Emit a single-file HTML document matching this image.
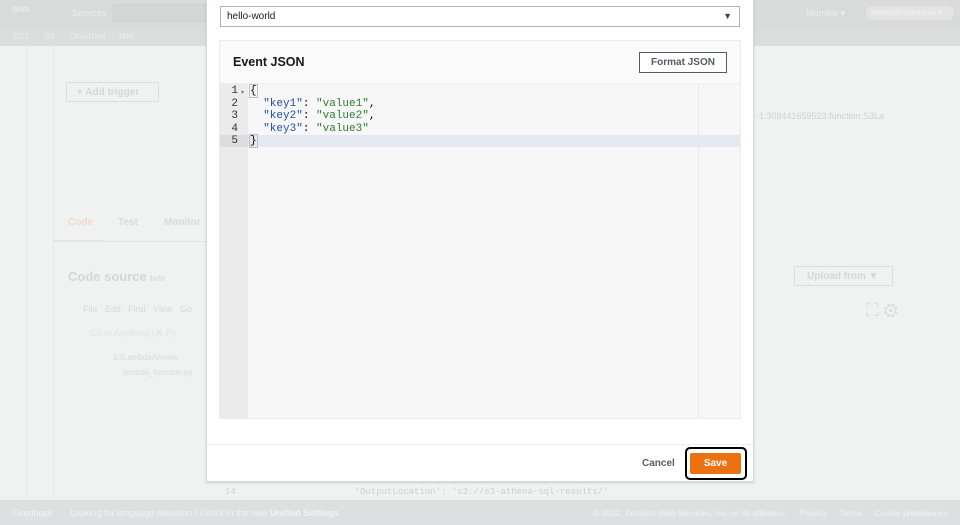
<!DOCTYPE html>
<html><head><meta charset="utf-8"><style>
*{box-sizing:border-box;margin:0;padding:0}
body{width:960px;height:525px;overflow:hidden;background:#f0f1f1;font-family:"Liberation Sans",sans-serif;position:relative}
.a{position:absolute;white-space:nowrap}
.mono{font-family:"Liberation Mono",monospace;font-size:11px}
</style></head><body>
<!-- background -->
<div class="a" style="left:0;top:0;width:960px;height:30px;background:#d9dada"></div>
<div class="a" style="left:0;top:30px;width:960px;height:16px;background:#dcdddd"></div>
<div class="a" style="left:12px;top:4px;font-size:10px;color:#eee">aws</div>
<div class="a" style="left:72px;top:8px;font-size:9px;color:#eee">Services</div>
<div class="a" style="left:113px;top:4px;width:95px;height:18px;border:1px solid #cfd0d0;background:#d4d5d5"></div>
<div class="a" style="left:13px;top:32px;font-size:8px;color:#eee">EC2 &nbsp;&nbsp;&nbsp;&nbsp;&nbsp; S3 &nbsp;&nbsp;&nbsp;&nbsp;&nbsp; CloudTrail &nbsp;&nbsp;&nbsp;&nbsp; IAM</div>
<div class="a" style="left:806px;top:8px;font-size:9px;color:#eee">Mumbai ▾</div>
<div class="a" style="left:866px;top:6px;width:88px;height:14px;border-radius:7px;background:#e3e3e3;font-size:8px;color:#f3f3f3;padding:2px 5px">hemanth-personal ▾</div>
<div class="a" style="left:26px;top:46px;width:1px;height:454px;background:#e6e7e7"></div>
<div class="a" style="left:53px;top:46px;width:1px;height:454px;background:#e8e9e9"></div>
<div class="a" style="left:66px;top:82px;width:93px;height:20px;border:1px solid #dcdede;font-size:10px;font-weight:bold;color:#d5d7d7;padding:4px 10px">+ Add trigger</div>
<div class="a" style="left:756px;top:111px;font-size:9px;color:#d0d2d2">-1:308441659523:function:S3La</div>
<div class="a" style="left:54px;top:241px;width:152px;height:1px;background:#e3e4e4"></div>
<div class="a" style="left:54px;top:240px;width:49px;height:2px;background:#e3e4e4"></div>
<div class="a" style="left:68px;top:217px;font-size:10px;font-weight:bold;color:#f3d9ca">Code</div>
<div class="a" style="left:118px;top:217px;font-size:10px;font-weight:bold;color:#d8dada">Test</div>
<div class="a" style="left:164px;top:217px;font-size:10px;font-weight:bold;color:#d8dada">Monitor</div>
<div class="a" style="left:68px;top:269px;font-size:13px;font-weight:bold;color:#d5d7d7">Code source <span style="font-size:8px;color:#d4dcea">Info</span></div>
<div class="a" style="left:794px;top:266px;width:99px;height:20px;border:1px solid #dcdede;font-size:10px;font-weight:bold;color:#d5d7d7;padding:4px 12px">Upload from ▼</div>
<div class="a" style="left:866px;top:300px;font-size:18px;color:#dadcdc">⛶ ⚙</div>
<div class="a" style="left:83px;top:304px;font-size:9px;color:#d8dada">File &nbsp; Edit &nbsp; Find &nbsp; View &nbsp; Go</div>
<div class="a" style="left:90px;top:328px;font-size:9px;color:#e2e3e3">Go to Anything (⌘ P)</div>
<div class="a" style="left:113px;top:353px;font-size:8px;color:#d8dada">S3LambdaAthena</div>
<div class="a" style="left:123px;top:368px;font-size:8px;color:#d8dada">lambda_function.py</div>
<div class="a" style="left:0;top:500px;width:960px;height:25px;background:#dedfe0"></div>
<div class="a" style="left:13px;top:508px;font-size:9px;color:#f2f2f2">Feedback &nbsp;&nbsp;&nbsp;&nbsp;&nbsp; Looking for language selection? Find it in the new <b>Unified Settings</b></div>
<div class="a" style="left:593px;top:508px;font-size:8.5px;color:#f2f2f2">© 2022, Amazon Web Services, Inc. or its affiliates. &nbsp;&nbsp;&nbsp;&nbsp; Privacy &nbsp;&nbsp;&nbsp; Terms &nbsp;&nbsp;&nbsp; Cookie preferences</div>
<div class="a mono" style="left:225px;top:487px;font-size:9px;color:#cdcfcf">14 &nbsp;&nbsp;&nbsp;&nbsp;&nbsp;&nbsp;&nbsp;&nbsp;&nbsp;&nbsp;&nbsp;&nbsp;&nbsp;&nbsp;&nbsp;&nbsp;&nbsp;&nbsp;&nbsp;&nbsp;&nbsp;'OutputLocation': 's3://s3-athena-sql-results/'</div>

<!-- modal -->
<div class="a" style="left:206px;top:0;width:548px;height:482px;background:#fff;border:1px solid #d5dbdb;border-top:none;box-shadow:0 1px 2px rgba(0,0,0,.15)"></div>
<div class="a" style="left:220px;top:6px;width:520px;height:21px;border:1px solid #aab7b8;font-size:10px;color:#16191f;padding:4px 6px">hello-world<span style="position:absolute;right:7px;top:4px;font-size:9px;color:#444">▼</span></div>
<div class="a" style="left:219px;top:40px;width:522px;height:379px;background:#fafafa;border:1px solid #eaeded"></div>
<div class="a" style="left:233px;top:55px;font-size:12.5px;font-weight:bold;color:#16191f">Event JSON</div>
<div class="a" style="left:639px;top:52px;width:88px;height:21px;border:1px solid #545b64;background:#fff;font-size:10px;font-weight:bold;color:#545b64;text-align:center;line-height:19px">Format JSON</div>
<div class="a" style="left:220px;top:83px;width:520px;height:335px;background:#f7f7f7;border-top:1px solid #eee"></div>
<div class="a" style="left:220px;top:84px;width:28px;height:334px;background:#ebebeb"></div>
<div class="a" style="left:698px;top:84px;width:1px;height:334px;background:#e8e8e8"></div>
<div class="a" style="left:248px;top:135px;width:492px;height:12px;background:#e4e8f1"></div>
<div class="a" style="left:220px;top:135px;width:28px;height:12px;background:#dcdcdc"></div>
<div class="a mono" style="left:220px;top:85px;width:28px;line-height:12.6px;color:#333;text-align:right;padding-right:10px">1<br>2<br>3<br>4<br>5</div>
<div class="a" style="left:241px;top:89px;font-size:6px;color:#777">▾</div>
<div class="a mono" style="left:250px;top:85px;line-height:12.6px;color:#000;white-space:pre"><span style="outline:1px solid #bfbfbf">{</span>
  <span style="color:#1f4fa8">"key1"</span>: <span style="color:#2f7a2f">"value1"</span>,
  <span style="color:#1f4fa8">"key2"</span>: <span style="color:#2f7a2f">"value2"</span>,
  <span style="color:#1f4fa8">"key3"</span>: <span style="color:#2f7a2f">"value3"</span>
<span style="outline:1px solid #bfbfbf">}</span></div>
<div class="a" style="left:207px;top:444px;width:546px;height:1px;background:#eaeded"></div>
<div class="a" style="left:642px;top:458px;font-size:10px;font-weight:bold;color:#545b64">Cancel</div>
<div class="a" style="left:685px;top:447px;width:62px;height:33px;border:2px solid #000;border-radius:5px"></div>
<div class="a" style="left:690px;top:453px;width:51px;height:21px;background:#ec7211;color:#fff;font-size:10px;font-weight:bold;text-align:center;line-height:21px;border-radius:2px">Save</div>
</body></html>
